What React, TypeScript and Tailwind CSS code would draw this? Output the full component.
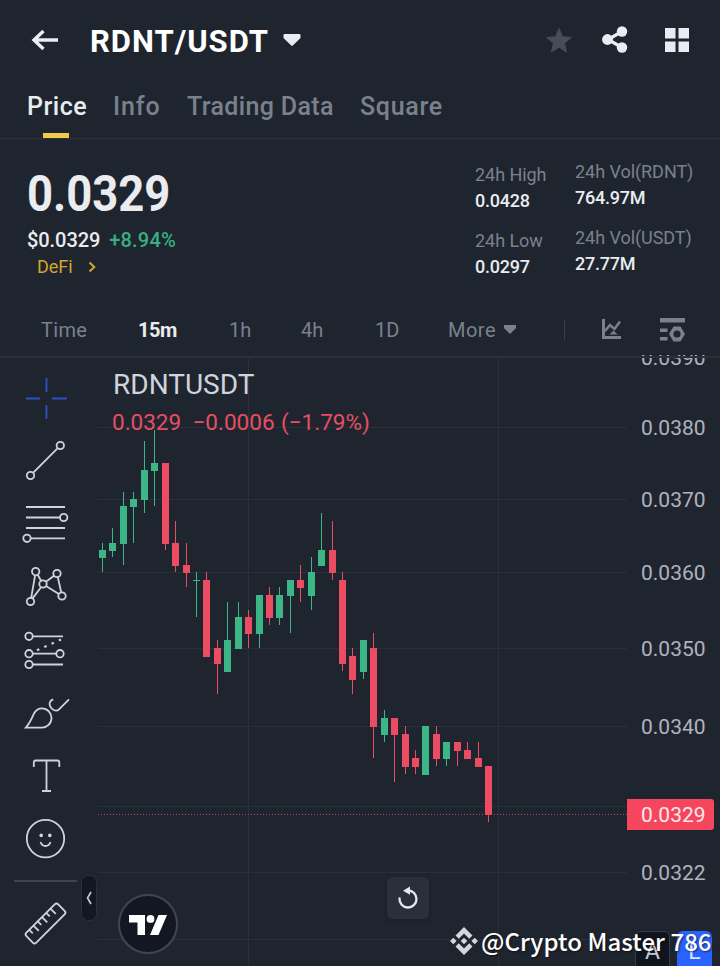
import type { ReactNode } from 'react';

type Candle = {
  x: number;
  high: number;
  low: number;
  top: number;
  bottom: number;
  up?: boolean;
};

const candles: Candle[] = [
  { x: 102, high: 543, low: 572, top: 550, bottom: 558, up: true },
  { x: 112, high: 528, low: 557, top: 543, bottom: 551, up: true },
  { x: 123, high: 492, low: 565, top: 506, bottom: 544, up: true },
  { x: 133, high: 492, low: 543, top: 499, bottom: 507, up: true },
  { x: 144, high: 441, low: 513, top: 470, bottom: 500, up: true },
  { x: 154, high: 430, low: 506, top: 463, bottom: 471, up: true },
  { x: 165, high: 463, low: 550, top: 463, bottom: 544 },
  { x: 175, high: 521, low: 572, top: 543, bottom: 566 },
  { x: 186, high: 543, low: 587, top: 565, bottom: 573 },
  { x: 196, high: 572, low: 617, top: 580, bottom: 581, up: true },
  { x: 206, high: 572, low: 657, top: 580, bottom: 657 },
  { x: 217, high: 640, low: 694, top: 648, bottom: 664 },
  { x: 227, high: 602, low: 672, top: 640, bottom: 672, up: true },
  { x: 238, high: 602, low: 649, top: 617, bottom: 649, up: true },
  { x: 248, high: 610, low: 648, top: 617, bottom: 634 },
  { x: 259, high: 595, low: 648, top: 595, bottom: 634, up: true },
  { x: 269, high: 587, low: 625, top: 595, bottom: 618 },
  { x: 279, high: 587, low: 625, top: 595, bottom: 618, up: true },
  { x: 290, high: 580, low: 633, top: 580, bottom: 596, up: true },
  { x: 300, high: 565, low: 602, top: 580, bottom: 588 },
  { x: 311, high: 557, low: 610, top: 572, bottom: 596, up: true },
  { x: 321, high: 513, low: 566, top: 550, bottom: 566, up: true },
  { x: 332, high: 521, low: 580, top: 550, bottom: 573 },
  { x: 342, high: 572, low: 671, top: 580, bottom: 664 },
  { x: 352, high: 648, low: 694, top: 656, bottom: 680 },
  { x: 363, high: 640, low: 679, top: 640, bottom: 672, up: true },
  { x: 373, high: 633, low: 758, top: 648, bottom: 727 },
  { x: 384, high: 710, low: 742, top: 718, bottom: 735, up: true },
  { x: 394, high: 718, low: 782, top: 718, bottom: 735 },
  { x: 405, high: 726, low: 774, top: 734, bottom: 767 },
  { x: 415, high: 750, low: 774, top: 758, bottom: 767 },
  { x: 425, high: 726, low: 775, top: 726, bottom: 775, up: true },
  { x: 436, high: 726, low: 766, top: 734, bottom: 759 },
  { x: 446, high: 742, low: 766, top: 742, bottom: 759, up: true },
  { x: 457, high: 742, low: 766, top: 742, bottom: 751 },
  { x: 467, high: 742, low: 759, top: 750, bottom: 759 },
  { x: 478, high: 742, low: 767, top: 758, bottom: 767 },
  { x: 488, high: 766, low: 822, top: 766, bottom: 815 },
];

const gridRows = [427, 499, 572, 648, 726, 806, 872, 939];
const gridColumns = [248, 498];

const axisLabels = [
  { value: '0.0390', y: 358 },
  { value: '0.0380', y: 428 },
  { value: '0.0370', y: 500 },
  { value: '0.0360', y: 573 },
  { value: '0.0350', y: 649 },
  { value: '0.0340', y: 727 },
  { value: '0.0322', y: 873 },
];

function ToolIcon({ children, className = 'h-[63px]' }: { children: ReactNode; className?: string }) {
  return (
    <button className={`flex w-12 shrink-0 items-center ${className}`}>
      <svg width="48" height="48" viewBox="0 0 48 48" fill="none" stroke="#d0d3dc" strokeWidth="1.8">
        {children}
      </svg>
    </button>
  );
}

function Toolbar() {
  return (
    <div className="flex w-[98px] shrink-0 flex-col pt-[11px] pl-[22px]">
      <ToolIcon>
        <path d="M24.5 4v14M24.5 31v14M4 24.5h14M30 24.5h15" stroke="#2f4fc4" />
      </ToolIcon>
      <ToolIcon>
        <path d="M11.3 35.7 35.5 11.3" />
        <circle cx="38.3" cy="8.5" r="3.7" />
        <circle cx="8.5" cy="38.5" r="3.7" />
      </ToolIcon>
      <ToolIcon>
        <path d="M4 7h39M4 17.5h34M4 28h39M9 38.3h34" />
        <circle cx="41.7" cy="17.5" r="3.7" />
        <circle cx="5" cy="38.3" r="3.7" />
      </ToolIcon>
      <ToolIcon>
        <path d="m9.2 34.8 3.9-22.4M15.6 11.8l3.5 6M24 18.8l8-6M35.8 14.2l3.4 15.1M24 23l12.9 8M19 24.2l-8.4 11.2" />
        <circle cx="13.7" cy="8.6" r="3.7" />
        <circle cx="35" cy="10.5" r="3.7" />
        <circle cx="21" cy="21" r="3.7" />
        <circle cx="40" cy="33" r="3.7" />
        <circle cx="8.5" cy="38.5" r="3.7" />
      </ToolIcon>
      <ToolIcon>
        <path d="M11 10.3h30M11 27.7h23M11 38.5h30" />
        <path d="m15 24.3 24-10.8" strokeWidth="2.2" strokeDasharray="2.5 5.5" />
        <circle cx="7" cy="10.3" r="3.7" />
        <circle cx="7" cy="27.7" r="3.7" />
        <circle cx="38" cy="27.7" r="3.7" />
        <circle cx="7" cy="38.5" r="3.7" />
      </ToolIcon>
      <ToolIcon>
        <path d="M3.8 38.6C8 34 9.5 30 12 24.5c2-4 5-5.2 8-5.2 5.5 0 9.5 4.7 9.5 9.7 0 5.5-4.5 9.6-9.5 9.6Z" />
        <path d="M31.2 10.3c-2.4 1-3.8 2.8-3.6 5 .3 3.8 4 6.4 6.6 6.4 1.3 0 2-.6 2.8-1.4l10-10" />
      </ToolIcon>
      <ToolIcon>
        <path d="M11.8 15V10.5q0-2 2-2h21.5q2 0 2 2V15M24.5 8.5V39M20 39h9" />
      </ToolIcon>
      <ToolIcon>
        <circle cx="23.5" cy="23.6" r="18.7" />
        <circle cx="19.2" cy="20.4" r="1.8" fill="#d0d3dc" stroke="none" />
        <circle cx="27.8" cy="20.4" r="1.8" fill="#d0d3dc" stroke="none" />
        <path d="M18.5 27c1 3 3 4 5 4s4-1 5-4" />
      </ToolIcon>
      <div className="mt-[10px] -ml-2 h-[2px] w-[63px] shrink-0 bg-[#3e434e]" />
      <ToolIcon className="mt-[17px] h-12">
        <g transform="translate(23.5 24.5) rotate(-45)">
          <rect x="-22.5" y="-7" width="45" height="14" rx="2.5" />
          <path d="M-16-7v5M-10-7v7.5M-4-7v5M2-7v7.5M8-7v5M14-7v7.5" />
        </g>
      </ToolIcon>
    </div>
  );
}

function PriceChart() {
  return (
    <svg className="block h-[611px] w-[622px]" viewBox="98 355 622 611">
      <g stroke="#2a303a" strokeWidth="1">
        {gridRows.map((y) => (
          <line key={y} x1="98" x2="627" y1={y + 0.5} y2={y + 0.5} />
        ))}
        {gridColumns.map((x) => (
          <line key={x} x1={x + 0.5} x2={x + 0.5} y1="358" y2="966" />
        ))}
      </g>
      {candles.map((c) => (
        <g key={c.x} fill={c.up ? '#3cb587' : '#ec4c62'}>
          <rect x={c.x} y={c.high} width="1" height={c.low - c.high} />
          <rect x={c.x - 3} y={c.top} width="7" height={c.bottom - c.top} />
        </g>
      ))}
      <line x1="98" x2="627" y1="814.5" y2="814.5" stroke="#b9485a" strokeDasharray="1 2" />
      <g fill="#b0b3bc" fontFamily="Roboto, sans-serif" fontSize="21">
        {axisLabels.map((label) => (
          <text key={label.value} x="641" y={label.y + 6.9}>
            {label.value}
          </text>
        ))}
      </g>
      <path d="M627 799h84a3 3 0 0 1 3 3v25a3 3 0 0 1-3 3h-84Z" fill="#f6465d" />
      <text x="641" y="822" fill="#fbe9ec" fontFamily="Roboto, sans-serif" fontSize="21">
        0.0329
      </text>
    </svg>
  );
}

function Stat({ label, value }: { label: string; value: string }) {
  return (
    <div className="text-[18px] leading-[26px] whitespace-nowrap">
      <div className="tracking-[-0.05px] text-[#7b818c]">{label}</div>
      <div className="font-medium tracking-[-0.25px] text-[#eaecef]">{value}</div>
    </div>
  );
}

export default function App() {
  return (
    <div className="relative flex h-[966px] w-[720px] flex-col overflow-hidden bg-[#1f252f] font-['Roboto',sans-serif] text-[#eaecef]">
      <header className="flex h-20 shrink-0 items-center pl-[31px]">
        <svg width="28" height="22" viewBox="0 0 28 22" fill="none" stroke="#eaecf3" strokeWidth="3.4">
          <path d="M27 11H3M12.5 2 3 11l9.5 9" />
        </svg>
        <h1 className="ml-[31px] w-[181px] pt-[3px] text-[31px] leading-10 font-bold tracking-[1px] text-white">
          RDNT/USDT
        </h1>
        <svg className="ml-[12px]" width="18" height="14" viewBox="0 0 18 14" fill="#eaecf3">
          <path d="M1.5 1h15q1 0 1 1v3L9.8 12.6q-.8.7-1.6 0L.5 5V2q0-1 1-1Z" />
        </svg>
        <svg className="ml-[244px]" width="28" height="28" viewBox="0 0 28 28" fill="#474d57">
          <path
            d="m14 2.5 3.4 8.3 8.9.7-6.8 5.8 2.1 8.7-7.6-4.7L6.400 26l2.1-8.7-6.8-5.8 8.9-.7Z"
            stroke="#474d57"
            strokeLinejoin="round"
          />
        </svg>
        <svg className="ml-[28px]" width="28" height="28" viewBox="0 0 28 28" fill="#eaecf3">
          <path d="M21 5.500 7 13.500l14 8" fill="none" stroke="#eaecf3" strokeWidth="3.2" />
          <circle cx="21" cy="5.5" r="5.2" />
          <circle cx="6.5" cy="13.5" r="5.4" />
          <circle cx="21" cy="21.5" r="5.2" />
        </svg>
        <svg className="ml-[36px]" width="24" height="24" viewBox="0 0 24 24" fill="#eaecf3">
          <path d="M0 0h10.5v10.5H0ZM13.5 0H24v10.5H13.5ZM0 13.5h10.5V24H0ZM13.5 13.5H24V24H13.5Z" />
        </svg>
      </header>

      <nav className="flex h-[59px] shrink-0 border-b border-[#2d333d] pl-[27px] text-[25px] leading-[54px] font-medium whitespace-nowrap text-[#7b818c]">
        <div className="relative w-[86px] tracking-[0.5px] text-[#eaecef]">
          Price
          <span className="absolute top-[53px] left-4 h-[5px] w-[26px] bg-[#f0cb4b]" />
        </div>
        <div className="w-[74px] tracking-[0.9px]">Info</div>
        <div className="w-[173px] tracking-[0.35px]">Trading Data</div>
        <div className="tracking-[0.7px]">Square</div>
      </nav>

      <section className="flex h-[164px] shrink-0">
        <div className="w-[475px] pl-[27px]">
          <div className="mt-[25px] w-[160px] origin-left scale-x-[0.908] text-[50px] leading-[60px] font-bold">0.0329</div>
          <div className="mt-[3px] flex w-[160px] origin-left scale-x-[0.955] text-[21px] leading-[27px] font-medium whitespace-nowrap">
            <span className="w-[86px] tracking-[-0.1px]">$0.0329</span>
            <span className="tracking-[0.2px] text-[#35b082]">+8.94%</span>
          </div>
          <div className="flex items-center pl-[10px] text-[18px] leading-[26px] text-[#d3a62b]">
            DeFi
            <svg className="ml-[15px]" width="8" height="12" viewBox="0 0 8 12" fill="none" stroke="#d3a62b" strokeWidth="2">
              <path d="m1.5 1.5 4.8 4.5-4.8 4.5" />
            </svg>
          </div>
        </div>
        <div className="flex w-[100px] flex-col gap-[14px] pt-[23px]">
          <Stat label="24h High" value="0.0428" />
          <Stat label="24h Low" value="0.0297" />
        </div>
        <div className="flex flex-col gap-[14px] pt-5">
          <Stat label="24h Vol(RDNT)" value="764.97M" />
          <Stat label="24h Vol(USDT)" value="27.77M" />
        </div>
      </section>

      <div className="flex h-[52px] shrink-0 items-center pt-px pl-[41px] text-[20px] text-[#7b818c]">
        <span className="w-[97px] tracking-[0.3px]">Time</span>
        <span className="w-[91px] font-bold tracking-[-0.5px] text-[#eaecef]">15m</span>
        <span className="w-[72px]">1h</span>
        <span className="w-[74px]">4h</span>
        <span className="w-[73px]">1D</span>
        <span className="w-[56px] tracking-[0.5px]">More</span>
        <svg width="12" height="9" viewBox="0 0 12 9" fill="#7b818c">
          <path d="M0 0h12v3L6 9 0 3Z" />
        </svg>
        <span className="ml-[48px] h-5 w-px bg-[#3a404b]" />
        <svg className="ml-[37px]" width="20" height="21" viewBox="0 0 20 21" fill="none" stroke="#7b818c" strokeWidth="3">
          <path d="M1.5 0v18.500H19" />
          <path d="m3 12 5-6 4.500 4L18 2.500" strokeWidth="2.500" />
          <path d="m7.500 15.500 4-4 4 4Z" fill="#7b818c" stroke="none" />
        </svg>
        <svg className="ml-[38px]" width="26" height="26" viewBox="0 0 26 26" fill="#7b818c">
          <path d="M0 1h25v4.500H0ZM0 11.500h7.500V15H0ZM0 20h7.500v3.500H0Z" />
          <path
            fillRule="evenodd"
            d="M13.500 9.500h7l4.500 7.500-4.500 7.500h-7L9 17Zm3.500 3.900a3.600 3.600 0 1 0 0 7.200 3.600 3.600 0 0 0 0-7.200Z"
          />
        </svg>
      </div>

      <main className="relative flex h-[611px] shrink-0">
        <div className="absolute top-px left-0 h-[2px] w-full bg-[#2a3039]" />
        <Toolbar />
        <PriceChart />

        <div className="absolute top-[14px] left-[113px] text-[28px] leading-8 text-[#d0d3dc]">RDNTUSDT</div>
        <div className="absolute top-[53px] left-[112px] flex text-[22.5px] leading-7 whitespace-nowrap text-[#e84d62]">
          <span className="w-[80.5px]">0.0329</span>
          <span className="w-[88.5px]">−0.0006</span>
          <span>(−1.79%)</span>
        </div>

        <button className="absolute top-[521px] left-[82px] flex h-[44px] w-[14px] items-center justify-center rounded-md bg-[#121722] ring-1 ring-[#292e39]">
          <svg width="6" height="14" viewBox="0 0 6 14" fill="none" stroke="#c5c8d0" strokeWidth="1.7">
            <path d="M5 1 1.500 7 5 13" />
          </svg>
        </button>

        <div className="absolute top-[539px] left-[118px] flex h-[60px] w-[60px] items-center justify-center rounded-full border-2 border-[#42464f] bg-[#121722]">
          <svg className="mt-[2px]" width="38" height="20" viewBox="0 0 38 20" fill="#fff">
            <path d="M0 0h16v20H8.500V7.500H0ZM29.500 0H38l-8.500 20H21Z" />
            <circle cx="21.500" cy="3.900" r="3.900" />
          </svg>
        </div>

        <button className="absolute top-[522px] left-[387px] flex h-[42px] w-[42px] items-center justify-center rounded-md bg-[#2a303b] shadow-md">
          <svg width="22" height="24" viewBox="0 0 22 24" fill="none" stroke="#e6e8ee" strokeWidth="2.300">
            <path d="M2.500 12.500a8.500 8.500 0 1 0 8.500-8" strokeLinecap="round" />
            <path d="M13 .5v8.200L6 4.800Z" fill="#e6e8ee" stroke="none" />
          </svg>
        </button>

        <button className="absolute top-[576px] left-[635px] h-[42px] w-[35px] rounded-md border border-[#363b46] bg-[#10141e] text-[23px] leading-[38px] text-[#c5c8d0]">
          A
        </button>
        <button className="absolute top-[576px] left-[677px] h-[42px] w-[35px] rounded-md bg-[#2962ff] text-[23px] leading-[38px] text-[#dde5ff]">
          L
        </button>

        <div className="absolute top-[568px] left-[450px] flex items-center text-white [text-shadow:1px_1px_2px_#0009]">
          <svg width="28" height="28" viewBox="0 0 28 28" fill="#d5d6d9">
            <path d="m14 0 8.500 8.500-3.300 3.300L14 6.600l-5.200 5.200-3.300-3.300ZM14 28l8.500-8.500-3.300-3.300-5.200 5.200-5.200-5.200-3.300 3.300ZM3.300 10.700 6.600 14l-3.300 3.300L0 14ZM24.700 10.700 28 14l-3.300 3.300-3.300-3.300ZM14 10.700l3.300 3.300-3.300 3.300-3.300-3.300Z" />
          </svg>
          <span className="ml-[3px] font-['Noto_Sans_CJK_SC',sans-serif] text-[24px] leading-9 font-medium tracking-[0.05px] whitespace-nowrap">
            @Crypto Master 786
          </span>
        </div>
      </main>
    </div>
  );
}
